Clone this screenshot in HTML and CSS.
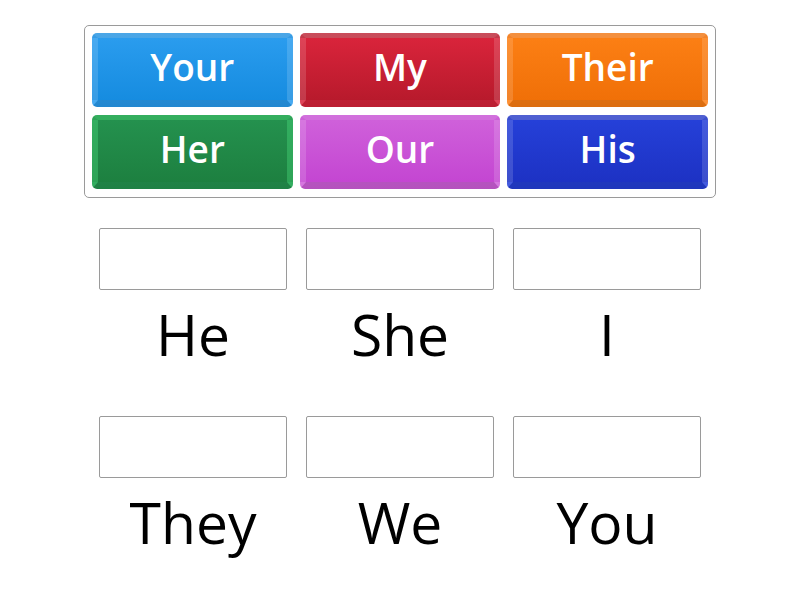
FILE: index.html
```html
<!DOCTYPE html>
<html lang="en">
<head>
<meta charset="utf-8">
<title>Possessive adjectives – match up</title>
<link rel="stylesheet" href="styles.css">
</head>
<body>
<main class="game">
  <section class="tray">
    <div class="tile tile-blue">Your</div>
    <div class="tile tile-red">My</div>
    <div class="tile tile-orange">Their</div>
    <div class="tile tile-green">Her</div>
    <div class="tile tile-purple">Our</div>
    <div class="tile tile-navy">His</div>
  </section>
  <section class="targets">
    <div class="target"><div class="slot"></div><div class="label">He</div></div>
    <div class="target"><div class="slot"></div><div class="label">She</div></div>
    <div class="target"><div class="slot"></div><div class="label">I</div></div>
    <div class="target"><div class="slot"></div><div class="label">They</div></div>
    <div class="target"><div class="slot"></div><div class="label">We</div></div>
    <div class="target"><div class="slot"></div><div class="label">You</div></div>
  </section>
</main>
</body>
</html>
```

FILE: styles.css
```css
html, body {
  margin: 0;
  padding: 0;
  background: #ffffff;
  font-family: "Open Sans", "Noto Sans", sans-serif;
}

.game {
  width: 800px;
  height: 600px;
  display: flex;
  flex-direction: column;
  align-items: center;
  padding-top: 25px;
  box-sizing: border-box;
}

/* tray of draggable answer tiles */
.tray {
  width: 632px;
  box-sizing: border-box;
  border: 1px solid #9a9a9a;
  border-radius: 5px;
  padding: 7px 7px 8px;
  display: grid;
  grid-template-columns: repeat(3, 1fr);
  gap: 8px 7px;
}

.tile {
  height: 74px;
  box-sizing: border-box;
  border-radius: 5px;
  border-style: solid;
  border-width: 5px 6px 7px 6px;
  border-color: rgba(255, 255, 255, 0.22) rgba(255, 255, 255, 0.14) rgba(0, 0, 0, 0.12) rgba(255, 255, 255, 0.14);
  color: #ffffff;
  font-weight: 600;
  font-size: 37px;
  display: flex;
  align-items: center;
  justify-content: center;
  padding-bottom: 6px;
}

.tile-blue   { background: linear-gradient(#2a9cee, #168ce0); }
.tile-red    { background: linear-gradient(#d9243b, #b81a2c); }
.tile-orange { background: linear-gradient(#fc7f14, #f07008); }
.tile-green  { background: linear-gradient(#24914e, #1d8040); border-color: rgba(80, 230, 130, 0.45) rgba(80, 230, 130, 0.35) rgba(0, 0, 0, 0.1) rgba(80, 230, 130, 0.35); }
.tile-purple { background: linear-gradient(#cf60da, #c446d2); }
.tile-navy   { background: linear-gradient(#2540d8, #1d32c4); }

/* drop targets with their prompt words */
.targets {
  margin-top: 30px;
  display: grid;
  grid-template-columns: repeat(3, 188px);
  column-gap: 19px;
  row-gap: 41px;
}

.target {
  display: flex;
  flex-direction: column;
  align-items: center;
}

.slot {
  width: 188px;
  height: 62px;
  box-sizing: border-box;
  border: 1px solid #9a9a9a;
  border-radius: 2px;
  background: #ffffff;
}

.label {
  margin-top: 3px;
  font-size: 57px;
  line-height: 82px;
  color: #000000;
}
```
